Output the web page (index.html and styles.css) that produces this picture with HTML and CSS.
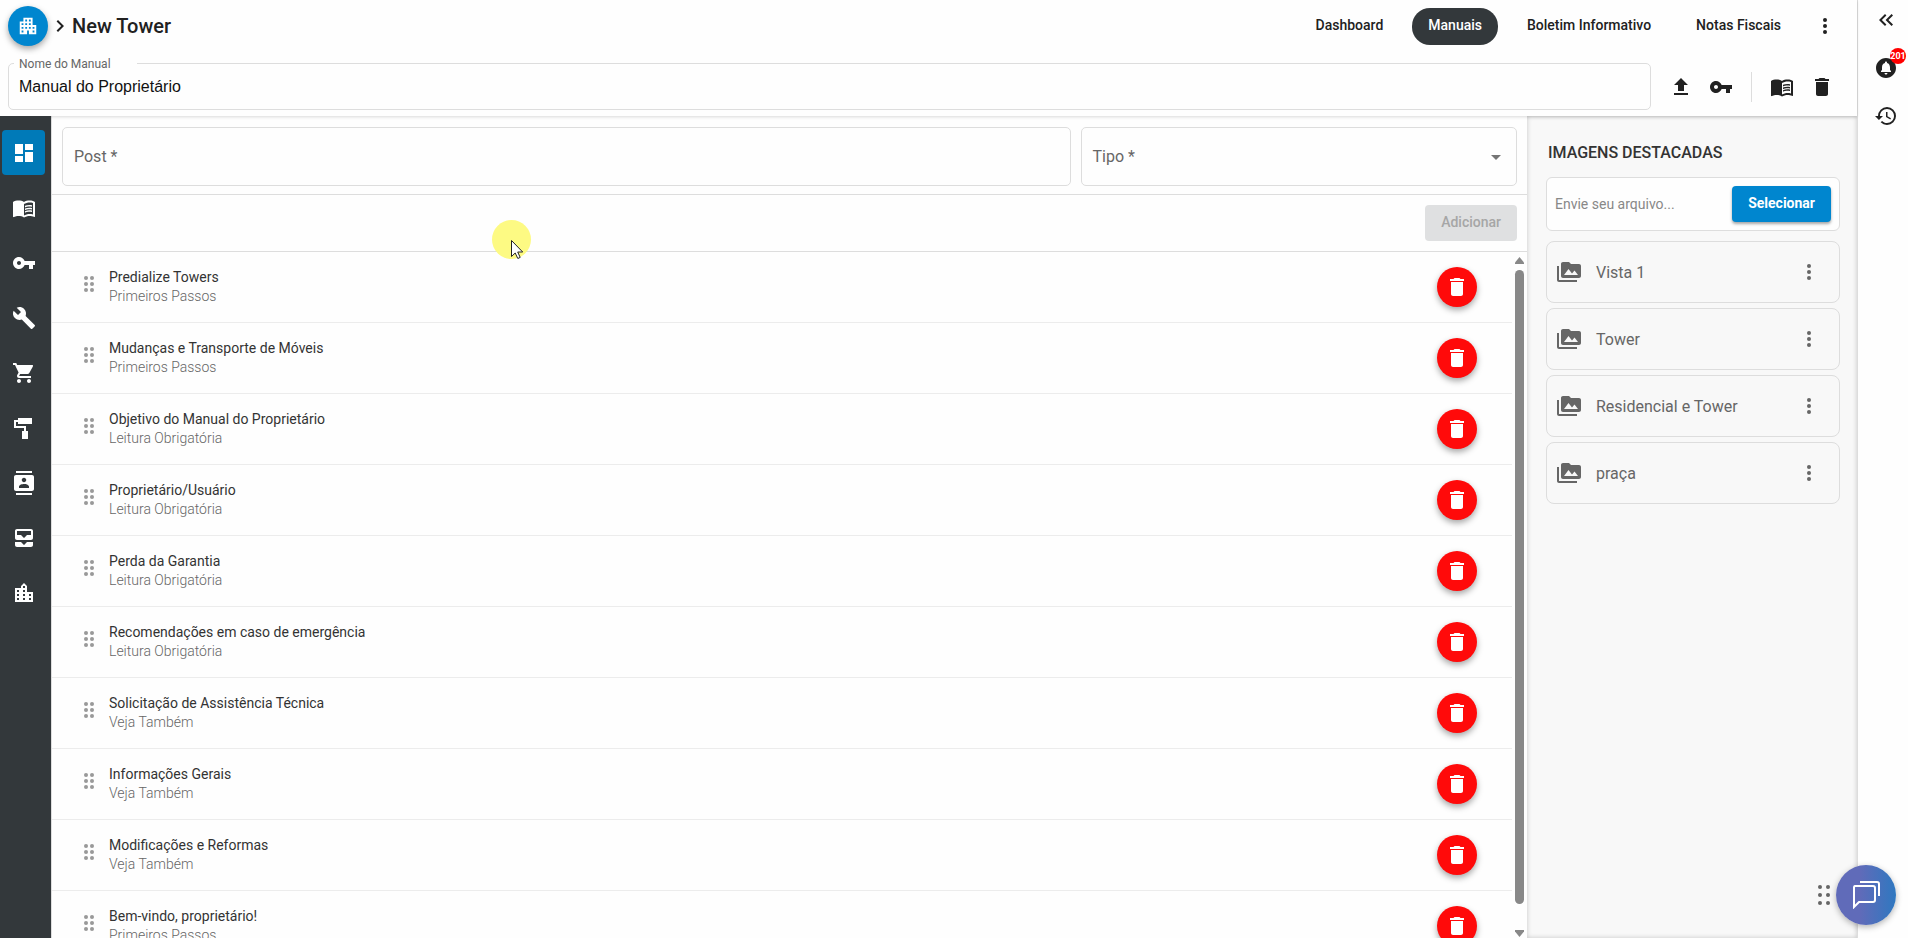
FILE: index.html
```
<!DOCTYPE html>
<html lang="pt-BR">

<head>
    <meta charset="UTF-8">
    <meta name="viewport" content="width=device-width, initial-scale=1">
    <title>New Tower - Manuais</title>
    <link rel="stylesheet" href="styles.css">
</head>

<body>
    <!-- icons -->
    <svg class="sprite" aria-hidden="true">
        <symbol id="i-apartment" viewBox="0 0 24 24"><path d="M17 11V3H7v4H3v14h8v-4h2v4h8V11h-4zM7 19H5v-2h2v2zm0-4H5v-2h2v2zm0-4H5V9h2v2zm4 4H9v-2h2v2zm0-4H9V9h2v2zm0-4H9V5h2v2zm4 8h-2v-2h2v2zm0-4h-2V9h2v2zm0-4h-2V5h2v2zm4 12h-2v-2h2v2zm0-4h-2v-2h2v2z"/></symbol>
        <symbol id="i-right" viewBox="0 0 24 24"><path d="M10 6L8.59 7.41 13.17 12l-4.58 4.59L10 18l6-6z"/></symbol>
        <symbol id="i-more" viewBox="0 0 24 24"><circle cx="12" cy="6" r="2"/><circle cx="12" cy="12" r="2"/><circle cx="12" cy="18" r="2"/></symbol>
        <symbol id="i-drag" viewBox="0 0 24 24"><circle cx="9" cy="6" r="2"/><circle cx="15" cy="6" r="2"/><circle cx="9" cy="12" r="2"/><circle cx="15" cy="12" r="2"/><circle cx="9" cy="18" r="2"/><circle cx="15" cy="18" r="2"/></symbol>
        <symbol id="i-upload" viewBox="0 0 24 24"><path d="M5 20h14v-2H5v2zm0-10h4v6h6v-6h4l-7-7-7 7z"/></symbol>
        <symbol id="i-key" viewBox="0 0 24 24"><path d="M12.65 10C11.83 7.67 9.61 6 7 6c-3.31 0-6 2.69-6 6s2.69 6 6 6c2.61 0 4.83-1.67 5.65-4H17v4h4v-4h2v-4H12.65zM7 14c-1.1 0-2-.9-2-2s.9-2 2-2 2 .9 2 2-.9 2-2 2z"/></symbol>
        <symbol id="i-book" viewBox="0 0 24 24"><path d="M21 5c-1.11-.35-2.33-.5-3.5-.5-1.95 0-4.05.4-5.5 1.5-1.45-1.1-3.55-1.5-5.5-1.5S2.45 4.9 1 6v14.65c0 .25.25.5.5.5.1 0 .15-.05.25-.05C3.1 20.45 5.05 20 6.5 20c1.95 0 4.05.4 5.5 1.5 1.35-.85 3.8-1.5 5.5-1.5 1.65 0 3.35.3 4.75 1.05.1.05.15.05.25.05.25 0 .5-.25.5-.5V6c-.6-.45-1.25-.75-2-1zm0 13.5c-1.1-.35-2.3-.5-3.5-.5-1.7 0-4.15.65-5.5 1.5V8c1.35-.85 3.8-1.5 5.5-1.5 1.2 0 2.4.15 3.5.5v11.5z"/><path d="M17.5 10.5c.88 0 1.73.09 2.5.26V9.24c-.79-.15-1.64-.24-2.5-.24-1.7 0-3.24.29-4.5.83v1.66c1.13-.64 2.7-.99 4.5-.99zM13 12.49v1.66c1.13-.64 2.7-.99 4.5-.99.88 0 1.73.09 2.5.26V11.9c-.79-.15-1.64-.24-2.5-.24-1.7 0-3.24.3-4.5.83zm4.5 1.84c-1.7 0-3.24.29-4.5.83v1.66c1.13-.64 2.7-.99 4.5-.99.88 0 1.73.09 2.5.26v-1.52c-.79-.16-1.64-.24-2.5-.24z"/></symbol>
        <symbol id="i-delete" viewBox="0 0 24 24"><path d="M6 19c0 1.1.9 2 2 2h8c1.1 0 2-.9 2-2V7H6v12zM19 4h-3.5l-1-1h-5l-1 1H5v2h14V4z"/></symbol>
        <symbol id="i-dashboard" viewBox="0 0 24 24"><path d="M3 13h8V3H3v10zm0 8h8v-6H3v6zm10 0h8V11h-8v10zm0-18v6h8V3h-8z"/></symbol>
        <symbol id="i-build" viewBox="0 0 24 24"><path d="M22.7 19l-9.1-9.1c.9-2.3.4-5-1.5-6.9-2-2-5-2.4-7.4-1.3L9 6 6 9 1.6 4.7C.4 7.1.9 10.1 2.9 12.1c1.9 1.9 4.6 2.4 6.9 1.5l9.1 9.1c.4.4 1 .4 1.4 0l2.3-2.3c.5-.4.5-1.1.1-1.4z"/></symbol>
        <symbol id="i-cart" viewBox="0 0 24 24"><path d="M7 18c-1.1 0-1.99.9-1.99 2S5.9 22 7 22s2-.9 2-2-.9-2-2-2zM1 2v2h2l3.6 7.59-1.35 2.45c-.16.28-.25.61-.25.96 0 1.1.9 2 2 2h12v-2H7.42c-.14 0-.25-.11-.25-.25l.03-.12.9-1.63h7.45c.75 0 1.41-.41 1.75-1.03l3.58-6.49A1 1 0 0 0 20 4H5.21l-.94-2H1zm16 16c-1.1 0-1.99.9-1.99 2s.89 2 1.99 2 2-.9 2-2-.9-2-2-2z"/></symbol>
        <symbol id="i-roller" viewBox="0 0 24 24"><path d="M20 2v6H6V6H4v4h10v5h2v8h-6v-8h2v-3H2V4h4V2z"/></symbol>
        <symbol id="i-contacts" viewBox="0 0 24 24"><path d="M20 0H4v2h16V0zM4 24h16v-2H4v2zM20 4H4c-1.1 0-2 .9-2 2v12c0 1.1.9 2 2 2h16c1.1 0 2-.9 2-2V6c0-1.1-.9-2-2-2zm-8 2.75c1.24 0 2.25 1.01 2.25 2.25s-1.01 2.25-2.25 2.25S9.75 10.24 9.75 9 10.76 6.75 12 6.75zM17 17H7v-1.5c0-1.67 3.33-2.5 5-2.5s5 .83 5 2.5V17z"/></symbol>
        <symbol id="i-inbox" viewBox="0 0 24 24"><path d="M19 3H5c-1.1 0-2 .9-2 2v7c0 1.1.9 2 2 2h14c1.1 0 2-.9 2-2V5c0-1.1-.9-2-2-2zm0 6h-4l-3 3-3-3H5V5h14v4zm-4 7h6v3c0 1.1-.9 2-2 2H5c-1.1 0-2-.9-2-2v-3h6l3 3z"/></symbol>
        <symbol id="i-city" viewBox="0 0 24 24"><path d="M15 11V5l-3-3-3 3v2H3v14h18V11h-6zm-8 8H5v-2h2v2zm0-4H5v-2h2v2zm0-4H5V9h2v2zm6 8h-2v-2h2v2zm0-4h-2v-2h2v2zm0-4h-2V9h2v2zm0-4h-2V5h2v2zm6 12h-2v-2h2v2zm0-4h-2v-2h2v2z"/></symbol>
        <symbol id="i-media" viewBox="0 0 24 24"><path d="M2 6H0v14c0 1.1.9 2 2 2h18v-2H2V6zm20-2h-8l-2-2H6c-1.1 0-2 .9-2 2v12c0 1.1.9 2 2 2h16c1.1 0 2-.9 2-2V6c0-1.1-.9-2-2-2zM7 15l4.5-6 3.5 4.51 2.5-3.01L21 15H7z"/></symbol>
        <symbol id="i-collapse" viewBox="0 0 24 24"><path d="M17.59 18L19 16.59 14.42 12 19 7.41 17.59 6l-6 6zM11 18l1.41-1.41L7.83 12l4.58-4.59L11 6l-6 6z"/></symbol>
        <symbol id="i-bell" viewBox="0 0 24 24"><path d="M12 2C6.48 2 2 6.48 2 12s4.48 10 10 10 10-4.48 10-10S17.52 2 12 2zm0 16.5c-.83 0-1.5-.67-1.5-1.5h3c0 .83-.67 1.5-1.5 1.5zm5-2.5H7v-1l1-1v-2.61C8 9.27 9.03 7.47 11 7v-.5c0-.57.43-1 1-1s1 .43 1 1V7c1.97.47 3 2.28 3 4.39V14l1 1v1z"/></symbol>
        <symbol id="i-history" viewBox="0 0 24 24"><path d="M13 3a9 9 0 0 0-9 9H1l3.89 3.89.07.14L9 12H6c0-3.87 3.13-7 7-7s7 3.13 7 7-3.13 7-7 7c-1.93 0-3.68-.79-4.94-2.06l-1.42 1.42A8.95 8.95 0 0 0 13 21a9 9 0 0 0 0-18zm-1 5v5l4.28 2.54.72-1.21-3.5-2.08V8H12z"/></symbol>
    </svg>

    <div class="app">
        <div class="workspace">
            <header class="header">
                <div class="topbar">
                    <a href="#" class="logo" aria-label="Empreendimentos"><svg class="icon"><use href="#i-apartment"/></svg></a>
                    <svg class="icon"><use href="#i-right"/></svg>
                    <h1>New Tower</h1>
                    <nav class="nav">
                        <a href="#">Dashboard</a>
                        <a href="#" class="current">Manuais</a>
                        <a href="#">Boletim Informativo</a>
                        <a href="#">Notas Fiscais</a>
                    </nav>
                    <button class="icon-btn" aria-label="Mais"><svg class="icon"><use href="#i-more"/></svg></button>
                </div>
                <div class="manual-bar">
                    <div class="name-field">
                        <label for="manualName">Nome do Manual</label>
                        <input type="text" id="manualName" value="Manual do Proprietário">
                    </div>
                    <div class="actions">
                        <button class="icon-btn" aria-label="Enviar"><svg class="icon"><use href="#i-upload"/></svg></button>
                        <button class="icon-btn" aria-label="Chaves"><svg class="icon"><use href="#i-key"/></svg></button>
                        <span class="divider"></span>
                        <button class="icon-btn" aria-label="Ler manual"><svg class="icon"><use href="#i-book"/></svg></button>
                        <button class="icon-btn" aria-label="Excluir manual"><svg class="icon"><use href="#i-delete"/></svg></button>
                    </div>
                </div>
            </header>

            <div class="content">
                <nav class="sidebar">
                    <a href="#" class="current" aria-label="Painel"><svg class="icon"><use href="#i-dashboard"/></svg></a>
                    <a href="#" aria-label="Manuais"><svg class="icon"><use href="#i-book"/></svg></a>
                    <a href="#" aria-label="Chaves"><svg class="icon"><use href="#i-key"/></svg></a>
                    <a href="#" aria-label="Assistência"><svg class="icon"><use href="#i-build"/></svg></a>
                    <a href="#" aria-label="Compras"><svg class="icon"><use href="#i-cart"/></svg></a>
                    <a href="#" aria-label="Personalização"><svg class="icon"><use href="#i-roller"/></svg></a>
                    <a href="#" aria-label="Contatos"><svg class="icon"><use href="#i-contacts"/></svg></a>
                    <a href="#" aria-label="Mensagens"><svg class="icon"><use href="#i-inbox"/></svg></a>
                    <a href="#" aria-label="Empreendimentos"><svg class="icon"><use href="#i-city"/></svg></a>
                </nav>

                <main class="main">
                    <form class="post-form">
                        <div class="fields">
                            <div class="field field-post">
                                <label for="post">Post *</label>
                                <input type="text" id="post">
                            </div>
                            <div class="field field-type">
                                <label for="type">Tipo *</label>
                                <select id="type">
                                    <option value=""></option>
                                </select>
                            </div>
                        </div>
                        <div class="form-footer">
                            <button type="submit" class="btn" disabled>Adicionar</button>
                        </div>
                    </form>

                    <div class="list-wrap">
                        <ul class="posts">
                            <li>
                                <svg class="icon drag"><use href="#i-drag"/></svg>
                                <div class="post-text"><h3>Predialize Towers</h3><p>Primeiros Passos</p></div>
                                <button class="delete" aria-label="Excluir"><svg class="icon"><use href="#i-delete"/></svg></button>
                            </li>
                            <li>
                                <svg class="icon drag"><use href="#i-drag"/></svg>
                                <div class="post-text"><h3>Mudanças e Transporte de Móveis</h3><p>Primeiros Passos</p></div>
                                <button class="delete" aria-label="Excluir"><svg class="icon"><use href="#i-delete"/></svg></button>
                            </li>
                            <li>
                                <svg class="icon drag"><use href="#i-drag"/></svg>
                                <div class="post-text"><h3>Objetivo do Manual do Proprietário</h3><p>Leitura Obrigatória</p></div>
                                <button class="delete" aria-label="Excluir"><svg class="icon"><use href="#i-delete"/></svg></button>
                            </li>
                            <li>
                                <svg class="icon drag"><use href="#i-drag"/></svg>
                                <div class="post-text"><h3>Proprietário/Usuário</h3><p>Leitura Obrigatória</p></div>
                                <button class="delete" aria-label="Excluir"><svg class="icon"><use href="#i-delete"/></svg></button>
                            </li>
                            <li>
                                <svg class="icon drag"><use href="#i-drag"/></svg>
                                <div class="post-text"><h3>Perda da Garantia</h3><p>Leitura Obrigatória</p></div>
                                <button class="delete" aria-label="Excluir"><svg class="icon"><use href="#i-delete"/></svg></button>
                            </li>
                            <li>
                                <svg class="icon drag"><use href="#i-drag"/></svg>
                                <div class="post-text"><h3>Recomendações em caso de emergência</h3><p>Leitura Obrigatória</p></div>
                                <button class="delete" aria-label="Excluir"><svg class="icon"><use href="#i-delete"/></svg></button>
                            </li>
                            <li>
                                <svg class="icon drag"><use href="#i-drag"/></svg>
                                <div class="post-text"><h3>Solicitação de Assistência Técnica</h3><p>Veja Também</p></div>
                                <button class="delete" aria-label="Excluir"><svg class="icon"><use href="#i-delete"/></svg></button>
                            </li>
                            <li>
                                <svg class="icon drag"><use href="#i-drag"/></svg>
                                <div class="post-text"><h3>Informações Gerais</h3><p>Veja Também</p></div>
                                <button class="delete" aria-label="Excluir"><svg class="icon"><use href="#i-delete"/></svg></button>
                            </li>
                            <li>
                                <svg class="icon drag"><use href="#i-drag"/></svg>
                                <div class="post-text"><h3>Modificações e Reformas</h3><p>Veja Também</p></div>
                                <button class="delete" aria-label="Excluir"><svg class="icon"><use href="#i-delete"/></svg></button>
                            </li>
                            <li>
                                <svg class="icon drag"><use href="#i-drag"/></svg>
                                <div class="post-text"><h3>Bem-vindo, proprietário!</h3><p>Primeiros Passos</p></div>
                                <button class="delete" aria-label="Excluir"><svg class="icon"><use href="#i-delete"/></svg></button>
                            </li>
                        </ul>
                        <div class="scrollbar" aria-hidden="true">
                            <svg viewBox="0 0 9 7"><path d="M4.5 0L9 5.500V7H0V5.500z"/></svg>
                            <div class="track"><div class="thumb"></div></div>
                            <svg viewBox="0 0 9 7"><path d="M4.5 7L9 1.500V0H0v1.500z"/></svg>
                        </div>
                    </div>
                </main>

                <aside class="images">
                    <h2>IMAGENS DESTACADAS</h2>
                    <div class="upload">
                        <input type="text" placeholder="Envie seu arquivo..." aria-label="Envie seu arquivo" readonly>
                        <button class="btn btn-primary">Selecionar</button>
                    </div>
                    <ul class="albums">
                        <li>
                            <svg class="icon"><use href="#i-media"/></svg>
                            <span>Vista 1</span>
                            <button class="icon-btn" aria-label="Opções"><svg class="icon"><use href="#i-more"/></svg></button>
                        </li>
                        <li>
                            <svg class="icon"><use href="#i-media"/></svg>
                            <span>Tower</span>
                            <button class="icon-btn" aria-label="Opções"><svg class="icon"><use href="#i-more"/></svg></button>
                        </li>
                        <li>
                            <svg class="icon"><use href="#i-media"/></svg>
                            <span>Residencial e Tower</span>
                            <button class="icon-btn" aria-label="Opções"><svg class="icon"><use href="#i-more"/></svg></button>
                        </li>
                        <li>
                            <svg class="icon"><use href="#i-media"/></svg>
                            <span>praça</span>
                            <button class="icon-btn" aria-label="Opções"><svg class="icon"><use href="#i-more"/></svg></button>
                        </li>
                    </ul>
                </aside>
            </div>
        </div>

        <div class="rail">
            <button class="icon-btn" aria-label="Expandir"><svg class="icon"><use href="#i-collapse"/></svg></button>
            <button class="icon-btn" aria-label="Notificações"><svg class="icon"><use href="#i-bell"/></svg><span class="badge">201</span></button>
            <button class="icon-btn" aria-label="Histórico"><svg class="icon"><use href="#i-history"/></svg></button>
        </div>
    </div>

    <!-- chat -->
    <div class="chat">
        <svg class="chat-grip" viewBox="0 0 12 20"><circle cx="2" cy="2" r="2"/><circle cx="10" cy="2" r="2"/><circle cx="2" cy="10" r="2"/><circle cx="10" cy="10" r="2"/><circle cx="2" cy="18" r="2"/><circle cx="10" cy="18" r="2"/></svg>
        <button class="chat-btn" aria-label="Abrir chat">
            <svg viewBox="0 0 28 28"><path d="M3 5h18a2 2 0 0 1 2 2v12a2 2 0 0 1-2 2H7l-5 5V6.500A1.500 1.500 0 0 1 3 5z"/><path d="M8 1h17a2 2 0 0 1 2 2v12"/></svg>
        </button>
    </div>

    <!-- mouse pointer -->
    <div class="pointer" aria-hidden="true">
        <svg viewBox="0 0 12 19"><path d="M.5.5v16l3.700-3.500 2.600 5.500 2.400-1.100L6.700 12h5z"/></svg>
    </div>
</body>

</html>
```
FILE: styles.css
```
* {
    margin: 0;
    padding: 0;
    box-sizing: border-box;
    list-style-type: none;
}

body {
    font-family: Roboto, "Liberation Sans", sans-serif;
    font-size: 14px;
    color: #212121;
    background-color: #fefefe;
    overflow: hidden;
}

a {
    color: inherit;
    text-decoration: none;
}

button,
input,
select {
    font: inherit;
    color: inherit;
    border: none;
    background: none;
    outline: none;
}

button {
    cursor: pointer;
}

.sprite {
    display: none;
}

.icon {
    display: block;
    flex: none;
    width: 24px;
    height: 24px;
    fill: currentColor;
}

.icon-btn {
    position: relative;
    display: flex;
    justify-content: center;
    align-items: center;
    flex: none;
    width: 40px;
    height: 40px;
}

.app {
    display: flex;
    height: 100vh;
}

.workspace {
    flex: 1;
    min-width: 0;
    display: flex;
    flex-direction: column;
}

/* header */
.header {
    position: relative;
    padding: 6px 12px 6px 8px;
    background-color: #fefefe;
    box-shadow: 0 1px 3px rgba(0, 0, 0, .15);
}

.topbar {
    display: flex;
    align-items: center;
    height: 40px;
}

.logo {
    display: flex;
    justify-content: center;
    align-items: center;
    width: 40px;
    height: 40px;
    border-radius: 50%;
    background-color: #0086cf;
    color: #fff;
    box-shadow: 0 3px 6px rgba(0, 0, 0, .35);
}

.logo .icon {
    width: 22px;
    height: 22px;
}

h1 {
    font-size: 20px;
    font-weight: 500;
    line-height: 24px;
}

.nav {
    display: flex;
    gap: 13px;
    margin: 0 8px 0 auto;
    font-weight: 500;
}

.nav a {
    padding: 0 16px 2px;
    line-height: 35px;
    border-radius: 18px;
}

.nav .current {
    background-color: #33383b;
    color: #fff;
}

.manual-bar {
    display: flex;
    align-items: center;
    margin-top: 17px;
}

.name-field {
    position: relative;
    flex: 1;
}

.name-field label {
    position: absolute;
    top: -8px;
    left: 6px;
    width: 123px;
    padding-left: 5px;
    font-size: 12px;
    line-height: 18px;
    background-color: #fefefe;
    color: #666;
}

.name-field input {
    display: block;
    width: 100%;
    height: 47px;
    padding: 0 10px;
    border: 1px solid #ddd;
    border-radius: 5px;
    font-family: "Liberation Sans", Arial, sans-serif;
    font-size: 16px;
    color: #111;
}

.actions {
    display: flex;
    align-items: center;
    padding: 0 3px 0 10px;
}

.divider {
    width: 1px;
    height: 30px;
    margin: 0 10px;
    background-color: #ddd;
}

/* content */
.content {
    flex: 1;
    min-height: 0;
    display: flex;
}

.sidebar {
    width: 51px;
    flex: none;
    display: flex;
    flex-direction: column;
    gap: 10px;
    padding: 14px 6px 0 2px;
    background-color: #33383b;
    color: #fff;
    position: relative;
}

.sidebar a {
    display: flex;
    justify-content: center;
    align-items: center;
    height: 45px;
    border-radius: 4px;
}

.sidebar .current {
    background-color: #007ab8;
}

.main {
    flex: 1;
    min-width: 0;
    display: flex;
    flex-direction: column;
    border-left: 1px solid #ddd;
}

.fields {
    display: flex;
    gap: 10px;
    padding: 11px 10px 8px;
    border-bottom: 1px solid #ddd;
}

.field {
    position: relative;
    font-size: 16px;
    color: #666;
}

.field-post {
    flex: 1;
}

.field-type {
    width: 30%;
}

.field label {
    position: absolute;
    left: 12px;
    top: 20px;
    line-height: 20px;
}

.field input,
.field select {
    display: block;
    width: 100%;
    height: 59px;
    padding: 0 12px;
    border: 1px solid #ddd;
    border-radius: 5px;
    appearance: none;
}

/* select arrow */
.field-type::after {
    content: "";
    position: absolute;
    right: 16px;
    top: 28px;
    border: 5px solid transparent;
    border-top-color: #757575;
    border-bottom: none;
}

.form-footer {
    display: flex;
    justify-content: flex-end;
    padding: 10px;
    border-bottom: 1px solid #ddd;
}

.btn {
    height: 36px;
    padding: 0 16px 2px;
    border-radius: 4px;
    font-weight: 500;
}

.btn:disabled {
    background-color: #dfe0e1;
    color: #a6a6a6;
}

.list-wrap {
    flex: 1;
    min-height: 0;
    display: flex;
}

.posts {
    flex: 1;
    overflow-y: auto;
    scrollbar-width: none;
}

.posts li {
    display: flex;
    align-items: center;
    height: 71px;
    padding: 0 35px 0 25px;
    border-bottom: 1px solid #ececec;
}

.drag {
    margin: 0 8px 6px 0;
    color: #999;
}

.post-text {
    flex: 1;
    line-height: 19px;
}

.post-text h3 {
    font-size: 14px;
    font-weight: 400;
    color: #333;
}

.post-text p {
    font-weight: 300;
    color: #666;
}

.delete {
    display: flex;
    justify-content: center;
    align-items: center;
    width: 40px;
    height: 40px;
    border-radius: 50%;
    background-color: #ff0a0a;
    color: #fff;
    box-shadow: 0 3px 6px rgba(0, 0, 0, .35);
}

.scrollbar {
    display: flex;
    flex-direction: column;
    width: 15px;
    gap: 6px;
    padding: 5px 3px 1px;
}

.scrollbar svg {
    width: 9px;
    height: 7px;
    flex: none;
    fill: #888;
}

.track {
    flex: 1;
}

.thumb {
    width: 9px;
    height: 97%;
    border-radius: 5px;
    background-color: #888;
}

/* images */
.images {
    flex: none;
    width: 330px;
    padding: 27px 17px 0 19px;
    background-color: #f8f8f8;
    box-shadow: inset 0 0 5px rgba(0, 0, 0, .2);
}

.images h2 {
    font-size: 16px;
    font-weight: 500;
    line-height: 20px;
    padding-left: 2px;
    margin-bottom: 14px;
    color: #333;
}

.upload {
    display: flex;
    align-items: center;
    height: 54px;
    padding: 0 8px;
    margin-bottom: 10px;
    border: 1px solid #ddd;
    border-radius: 6px;
    background-color: #fefefe;
}

.upload input {
    flex: 1;
    min-width: 0;
}

.upload input::placeholder {
    color: #888;
}

.btn-primary {
    background-color: #0086cf;
    color: #fff;
    font-weight: 700;
    box-shadow: 0 2px 3px rgba(0, 0, 0, .35);
}

.albums li {
    display: flex;
    align-items: center;
    height: 62px;
    padding: 0 10px;
    margin-bottom: 5px;
    border: 1px solid #ddd;
    border-radius: 8px;
    font-size: 16px;
    color: #666;
}

.albums span {
    flex: 1;
    padding-left: 15px;
}

/* right rail */
.rail {
    flex: none;
    width: 51px;
    display: flex;
    flex-direction: column;
    gap: 8px;
    padding-left: 8px;
    border-left: 1px solid #ddd;
}

.badge {
    position: absolute;
    top: 0;
    right: 0;
    width: 16px;
    height: 16px;
    border-radius: 50%;
    background-color: #f00;
    color: #fff;
    font-size: 9px;
    font-weight: 700;
    line-height: 16px;
    text-align: center;
}

.chat {
    position: absolute;
    right: 12px;
    bottom: 13px;
    display: flex;
    align-items: center;
    gap: 6px;
}

.chat-grip {
    width: 12px;
    height: 20px;
    fill: #666;
}

.chat-btn {
    display: flex;
    justify-content: center;
    align-items: center;
    width: 60px;
    height: 60px;
    border-radius: 50%;
    background: linear-gradient(90deg, #606bb9 40%, #2f78c0);
    box-shadow: 0 2px 6px rgba(0, 0, 0, .3);
}

.chat-btn svg {
    width: 28px;
    height: 28px;
    fill: none;
    stroke: #fff;
    stroke-width: 2;
}

.pointer {
    position: absolute;
    left: 492px;
    top: 220px;
    width: 39px;
    height: 39px;
    padding: 20px 0 0 19px;
    border-radius: 50%;
    background-color: #fdfa83;
}

.pointer svg {
    display: block;
    width: 12px;
    height: 19px;
    fill: #fff;
    stroke: #222;
}
```
